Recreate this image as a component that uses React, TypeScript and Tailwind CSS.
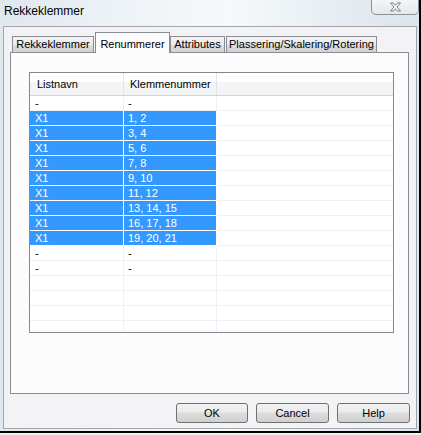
import React from 'react';

const rows: [string, string][] = [
  ['-', '-'],
  ['X1', '1, 2'],
  ['X1', '3, 4'],
  ['X1', '5, 6'],
  ['X1', '7, 8'],
  ['X1', '9, 10'],
  ['X1', '11, 12'],
  ['X1', '13, 14, 15'],
  ['X1', '16, 17, 18'],
  ['X1', '19, 20, 21'],
  ['-', '-'],
  ['-', '-'],
  ['', ''],
  ['', ''],
  ['', ''],
  ['', ''],
];

function CloseButton() {
  return (
    <div className="w-[48px] h-[16px] -mt-px border border-t-0 border-[#8d9096] rounded-b-[5px] bg-[linear-gradient(to_bottom,#f4f6f8,#e4e8ec)] flex items-center justify-center">
      <svg width="13" height="10" viewBox="0 0 13 10">
        <path
          d="M1.5 1 L4.5 1 L6.5 3.3 L8.5 1 L11.5 1 L8 5 L11.5 9 L8.5 9 L6.5 6.7 L4.5 9 L1.5 9 L5 5 Z"
          fill="#fbfbfb"
          stroke="#7a7d82"
          strokeWidth="1"
          strokeLinejoin="round"
        />
      </svg>
    </div>
  );
}

function Tab({ label, width, active }: { label: string; width: string; active?: boolean }) {
  if (active) {
    return (
      <div
        className={`${width} h-[21px] -mb-px relative z-10 border border-b-0 border-[#898c95] bg-[#fcfcfc] flex items-start justify-center pt-[3px] text-[11px] text-black`}
      >
        {label}
      </div>
    );
  }
  return (
    <div
      className={`${width} h-[16px] border border-b-0 border-[#898c95] bg-[linear-gradient(to_bottom,#f3f3f3,#ebebeb_50%,#dddddd_51%,#d3d3d3)] flex items-center justify-center text-[11px] text-black`}
    >
      {label}
    </div>
  );
}

function Button({ label, width }: { label: string; width: string }) {
  return (
    <div
      className={`${width} h-[20px] rounded-[3px] border border-[#707070] bg-[linear-gradient(to_bottom,#f2f2f2,#ebebeb_45%,#dddddd_50%,#cfcfcf)] flex items-center justify-center text-[11px] text-black`}
    >
      {label}
    </div>
  );
}

export default function App() {
  return (
    <div className="w-[421px] h-[435px] overflow-hidden bg-[#eef2f5] font-['Liberation_Sans',Arial,sans-serif]">
      <div className="w-[421px] h-[433px] border-r-2 border-b-2 border-black bg-[linear-gradient(to_right,#dfe8ee,#eef3f7_30%,#f6f9fb_55%,#e6edf2_80%,#dce5ec)] flex flex-col">
        {/* title bar */}
        <div className="h-[26px] flex items-start">
          <div className="flex-1 pl-[4px] pt-[4px] text-[12px] text-black leading-[15px]">Rekkeklemmer</div>
          <CloseButton />
        </div>

        {/* client area */}
        <div className="ml-[3px] mr-[2px] h-[403px] border border-[#a3a5aa] bg-[#f3f2f5] flex flex-col">
          <div className="ml-[6px] mt-[6px] w-[399px] flex flex-col">
            <div className="h-[19px] flex items-end pl-[2px]">
              <Tab label="Rekkeklemmer" width="w-[82px]" />
              <div className="w-px" />
              <Tab label="Renummerer" width="w-[75px]" active />
              <Tab label="Attributes" width="w-[55px]" />
              <div className="w-px" />
              <Tab label="Plassering/Skalering/Rotering" width="w-[151px]" />
            </div>

            <div className="h-[342px] border border-[#898c95] bg-[#fcfcfc]">
              {/* list view */}
              <div className="ml-[18px] mt-[19px] w-[365px] h-[261px] border border-[#828790] bg-white overflow-hidden text-[11px] leading-[14px]">
                <div className="h-[23px] flex border-b border-[#d5d5d5] bg-[linear-gradient(to_bottom,#ffffff_0,#ffffff_9px,#f3f4f6_9px)]">
                  <div className="w-[94px] border-r border-[#e3e4e6] pl-[7px] flex items-center text-black">Listnavn</div>
                  <div className="w-[93px] border-r border-[#e3e4e6] pl-[6px] flex items-center text-black">Klemmenummer</div>
                  <div className="flex-1" />
                </div>
                {rows.map(([a, b], i) => {
                  const sel = a === 'X1';
                  const cell = sel
                    ? 'bg-[#3399ff] text-white border-white'
                    : 'bg-white text-black border-[#f0eff3]';
                  return (
                    <div key={i} className="h-[15px] flex">
                      <div className={`w-[94px] border-r border-b pl-[5px] ${cell}`}>{a}</div>
                      <div className={`w-[93px] border-r border-b pl-[4px] ${cell}`}>{b}</div>
                      <div className="flex-1 border-b border-[#f0eff3]" />
                    </div>
                  );
                })}
              </div>
            </div>
          </div>

          <div className="mt-[9px] flex justify-end gap-[8px] pr-[6px]">
            <Button label="OK" width="w-[72px]" />
            <Button label="Cancel" width="w-[73px]" />
            <Button label="Help" width="w-[73px]" />
          </div>
        </div>
      </div>
    </div>
  );
}
